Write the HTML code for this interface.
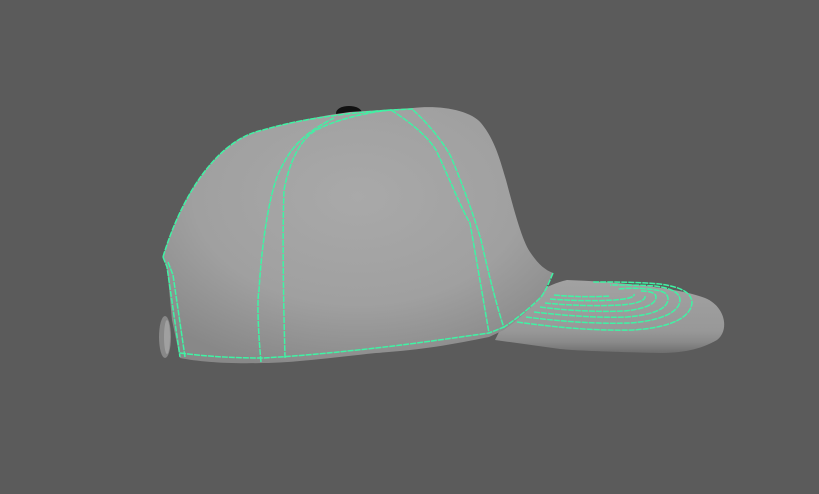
<!DOCTYPE html>
<html><head><style>
html,body{margin:0;padding:0;background:#5b5b5b;width:819px;height:494px;overflow:hidden}
</style></head><body>
<svg width="819" height="494" viewBox="0 0 819 494" xmlns="http://www.w3.org/2000/svg">
<defs>
<radialGradient id="cr" cx="0.5" cy="0.35" r="0.7">
<stop offset="0" stop-color="#a9a9a9"/><stop offset="0.6" stop-color="#a0a0a0"/><stop offset="1" stop-color="#888888"/>
</radialGradient>
<linearGradient id="br" x1="0" y1="0" x2="0" y2="1">
<stop offset="0" stop-color="#a2a2a2"/><stop offset="0.7" stop-color="#989898"/><stop offset="0.85" stop-color="#8a8a8a"/><stop offset="1" stop-color="#6e6e6e"/>
</linearGradient>
</defs>
<rect width="819" height="494" fill="#5b5b5b"/>
<ellipse cx="165" cy="337" rx="6" ry="21" fill="#888"/>
<ellipse cx="167" cy="337" rx="3" ry="17" fill="#a0a0a0"/>
<ellipse cx="349" cy="113" rx="13" ry="7" fill="#111"/>
<path d="M500,330 C520,300 545,285 567,280 C620,282 680,288 705,298 C725,306 730,330 717,340 C700,350 680,353 660,353 C620,352 580,351 560,349 L495,340 Z" fill="url(#br)"/>
<path d="M163,257 C180,200 215,140 263,130 C290,122 320,116 350,112 L413,108 C440,105 470,110 481,123 C495,140 500,160 506,180 C514,210 522,240 530,252 C538,264 545,270 553,273 L541,297 C530,310 515,322 504,330 L489,337 C450,345 420,350 376,353 C330,358 290,363 263,363 C230,364 200,362 180,358 L172,320 L167,267 Z" fill="url(#cr)"/>
<g fill="none" stroke="#3ff3a4" stroke-width="1.5" stroke-dasharray="6 1">
<path d="M163,257 C180,200 215,140 263,130 C290,122 330,114 391,110 L413,109"/>
<path d="M163,257 L167,267 L180,357"/>
<path d="M168,262 L173,275 L185,357"/>
<path d="M261,362 C258,330 257,300 259,290 C262,240 270,190 280,170 C290,150 300,135 334,118"/>
<path d="M285,358 C284,320 282,240 284,190 C290,160 300,140 316,130 C340,118 370,112 391,110"/>
<path d="M391,110 C415,125 430,140 436,150 C450,180 462,210 470,223 C480,280 485,310 489,333"/>
<path d="M413,110 C430,125 445,145 451,157 C465,190 475,220 481,240 C490,280 498,310 504,328"/>
<path d="M553,273 C548,285 545,292 541,297 C530,308 515,320 504,327"/>
<path d="M180,353 C210,357 240,358 263,358 C300,356 340,352 376,348 C420,343 460,337 489,333 L504,327"/>
<path d="M517,322 C560,328 600,331 633,330 C665,328 690,320 692,303 C692,292 680,287 660,284 C640,282 615,282 593,282"/>
<path d="M526,317 C565,322 600,324 630,323 C658,321 680,313 680,300 C680,292 670,288 655,286 C640,285 625,285 610,285"/>
<path d="M534,312 C568,316 600,318 627,317 C652,315 668,309 668,299 C668,292 660,290 648,289 C638,288 628,288 618,289"/>
<path d="M540,307 C570,311 600,312 624,311 C645,309 656,304 656,297 C656,293 650,291 640,291"/>
<path d="M545,303 C575,306 600,306 620,305 C638,304 646,300 645,296"/>
<path d="M550,299 C575,301 598,301 615,300 C628,299 635,297 634,294"/>
<path d="M554,295 C575,297 595,297 610,296"/>
</g>
</svg>
</body></html>
